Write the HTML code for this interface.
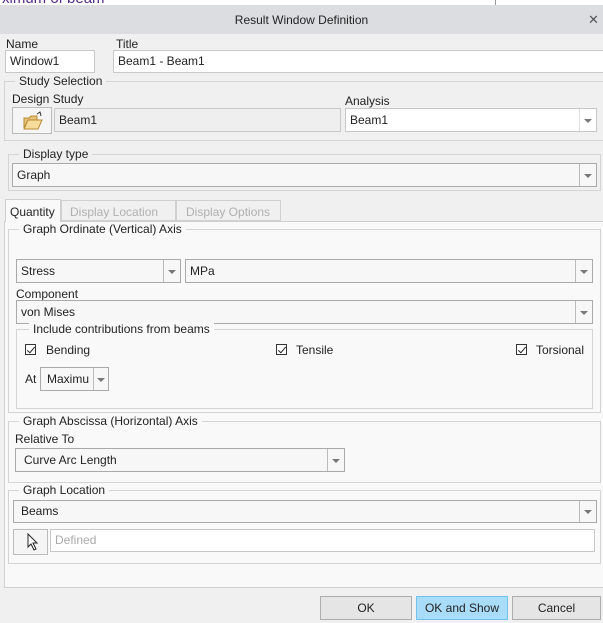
<!DOCTYPE html>
<html><head><meta charset="utf-8"><style>
*{box-sizing:border-box;margin:0;padding:0}
body{width:603px;height:623px;overflow:hidden;background:#f0f0f0;font-family:"Liberation Sans",sans-serif;font-size:12px;color:#222;position:relative}
.a{position:absolute}
.t{position:absolute;white-space:nowrap;font-size:12px}
.in{position:absolute;background:#fff;border:1px solid #c8c8c8;padding-left:4px;line-height:20px;white-space:nowrap}
.grp{position:absolute;border:1px solid #d4d4d4}
.lg{position:absolute;top:-8px;padding:0 4px;white-space:nowrap}
.cb{position:absolute;width:11px;height:11px;border:1px solid #333;background:#fff}
.cb::after{content:"";position:absolute;left:3px;top:0px;width:3px;height:7px;border:solid #222;border-width:0 1.5px 1.5px 0;transform:rotate(40deg)}
.btn{position:absolute;border:1px solid #adadad;background:#e5e5e5;text-align:center;line-height:22px}
</style></head><body>
<div class="a" style="left:0;top:0;width:603px;height:5px;background:#fff"></div>
<div class="t" style="left:2px;top:-10px;color:#5a2a8a;font-size:15px">ximum of beam</div>
<div class="a" style="left:495px;top:0;width:108px;height:5px;border-left:1px solid #999;background:#fff"></div>
<div class="a" style="left:0;top:5px;width:603px;height:29px;background:#dcdde0"></div>
<div class="t" style="left:0;width:603px;text-align:center;top:13px;font-size:12px">Result Window Definition</div>
<div class="t" style="left:588px;top:12px;font-size:13px;color:#555">✕</div>

<div class="t" style="left:6px;top:37px">Name</div>
<div class="t" style="left:116px;top:37px">Title</div>
<div class="in" style="left:5px;top:50px;width:90px;height:23px">Window1</div>
<div class="in" style="left:113px;top:50px;width:495px;height:23px">Beam1 - Beam1</div>

<div class="grp" style="left:4px;top:81px;width:605px;height:60px"><span class="lg" style="left:10px;background:#f0f0f0">Study Selection</span></div>
<div class="t" style="left:12px;top:92px">Design Study</div>
<div class="a" style="left:12px;top:107px;width:40px;height:27px;border:1px solid #bbb;background:#f5f5f5">
<svg width="22" height="20" style="position:absolute;left:9px;top:3px" viewBox="0 0 22 20"><path d="M2 7h5l2-2h6v4H6L2 17z" fill="#e6c27a" stroke="#b88a33"/><path d="M6 9h14l-4 9H2z" fill="#f6dc9a" stroke="#b88a33"/><path d="M15 3l3-2 1 4" fill="none" stroke="#333"/></svg></div>
<div class="in" style="left:54px;top:108px;width:287px;height:24px;background:#efefef;line-height:22px">Beam1</div>
<div class="t" style="left:345px;top:94px">Analysis</div>
<div class="in" style="left:345px;top:108px;width:252px;height:24px;line-height:22px">Beam1<b style="position:absolute;right:4px;top:10px;border-left:4px solid transparent;border-right:4px solid transparent;border-top:4px solid #777"></b><i style="position:absolute;right:16px;top:0;bottom:0;border-left:1px solid #ddd"></i></div>

<div class="grp" style="left:8px;top:154px;width:593px;height:37px"><span class="lg" style="left:10px;background:#f0f0f0">Display type</span></div>
<div class="in" style="left:12px;top:163px;width:585px;height:24px;line-height:22px;border-color:#aaa;background:#f7f7f7">Graph<b style="position:absolute;right:4px;top:10px;border-left:4px solid transparent;border-right:4px solid transparent;border-top:4px solid #777"></b><i style="position:absolute;right:16px;top:0;bottom:0;border-left:1px solid #bbb"></i></div>

<div class="a" style="left:4px;top:221px;width:600px;height:367px;border:1px solid #d0d0d0;background:#f9f9f9"></div>
<div class="a" style="left:5px;top:199px;width:56px;height:23px;border:1px solid #d0d0d0;border-bottom:none;background:#f9f9f9;padding:5px 0 0 4px;white-space:nowrap">Quantity</div>
<div class="a" style="left:61px;top:200px;width:115px;height:21px;border:1px solid #d0d0d0;background:#f0f0f0;color:#b0b0b0;padding:4px 0 0 8px;white-space:nowrap">Display Location</div>
<div class="a" style="left:176px;top:200px;width:105px;height:21px;border:1px solid #d0d0d0;background:#f0f0f0;color:#b0b0b0;padding:4px 0 0 9px;white-space:nowrap">Display Options</div>

<div class="grp" style="left:8px;top:229px;width:593px;height:184px"><span class="lg" style="left:10px;background:#f9f9f9">Graph Ordinate (Vertical) Axis</span></div>
<div class="in" style="left:16px;top:259px;width:165px;height:24px;line-height:22px;border-color:#aaa;background:#f7f7f7">Stress<b style="position:absolute;right:4px;top:10px;border-left:4px solid transparent;border-right:4px solid transparent;border-top:4px solid #777"></b><i style="position:absolute;right:16px;top:0;bottom:0;border-left:1px solid #bbb"></i></div>
<div class="in" style="left:185px;top:259px;width:408px;height:24px;line-height:22px;border-color:#aaa;background:#f7f7f7">MPa<b style="position:absolute;right:4px;top:10px;border-left:4px solid transparent;border-right:4px solid transparent;border-top:4px solid #777"></b><i style="position:absolute;right:16px;top:0;bottom:0;border-left:1px solid #bbb"></i></div>
<div class="t" style="left:16px;top:287px">Component</div>
<div class="in" style="left:16px;top:300px;width:577px;height:24px;line-height:22px;border-color:#aaa;background:#f7f7f7">von Mises<b style="position:absolute;right:4px;top:10px;border-left:4px solid transparent;border-right:4px solid transparent;border-top:4px solid #777"></b><i style="position:absolute;right:16px;top:0;bottom:0;border-left:1px solid #bbb"></i></div>
<div class="grp" style="left:16px;top:329px;width:577px;height:80px"><span class="lg" style="left:12px;background:#f9f9f9">Include contributions from beams</span></div>
<div class="cb" style="left:25px;top:344px"></div><div class="t" style="left:46px;top:343px">Bending</div>
<div class="cb" style="left:276px;top:344px"></div><div class="t" style="left:296px;top:343px">Tensile</div>
<div class="cb" style="left:516px;top:344px"></div><div class="t" style="left:536px;top:343px">Torsional</div>
<div class="t" style="left:25px;top:372px">At</div>
<div class="in" style="left:40px;top:367px;width:69px;height:24px;line-height:22px;border-color:#aaa;background:#f7f7f7;padding-left:6px">Maximu<b style="position:absolute;right:3px;top:10px;border-left:4px solid transparent;border-right:4px solid transparent;border-top:4px solid #777"></b><i style="position:absolute;right:14px;top:0;bottom:0;border-left:1px solid #bbb"></i></div>

<div class="grp" style="left:8px;top:421px;width:593px;height:62px"><span class="lg" style="left:10px;background:#f9f9f9">Graph Abscissa (Horizontal) Axis</span></div>
<div class="t" style="left:15px;top:432px">Relative To</div>
<div class="in" style="left:15px;top:448px;width:330px;height:24px;line-height:22px;border-color:#aaa;background:#f7f7f7;padding-left:8px">Curve Arc Length<b style="position:absolute;right:4px;top:10px;border-left:4px solid transparent;border-right:4px solid transparent;border-top:4px solid #777"></b><i style="position:absolute;right:16px;top:0;bottom:0;border-left:1px solid #bbb"></i></div>

<div class="grp" style="left:8px;top:490px;width:593px;height:74px"><span class="lg" style="left:10px;background:#f9f9f9">Graph Location</span></div>
<div class="in" style="left:13px;top:500px;width:584px;height:23px;line-height:21px;border-color:#aaa;background:#f7f7f7;padding-left:7px">Beams<b style="position:absolute;right:4px;top:9px;border-left:4px solid transparent;border-right:4px solid transparent;border-top:4px solid #777"></b><i style="position:absolute;right:16px;top:0;bottom:0;border-left:1px solid #bbb"></i></div>
<div class="a" style="left:13px;top:529px;width:35px;height:26px;border:1px solid #bbb;background:#f5f5f5">
<svg width="12" height="18" style="position:absolute;left:13px;top:3px" viewBox="0 0 12 18"><path d="M1 1v13l3-3 3 6 2-1-3-6h4z" fill="#fff" stroke="#222"/></svg></div>
<div class="in" style="left:50px;top:529px;width:545px;height:23px;color:#aaa;line-height:21px">Defined</div>

<div class="btn" style="left:320px;top:596px;width:92px;height:24px">OK</div>
<div class="btn" style="left:416px;top:596px;width:92px;height:24px;background:#a9dcf8;border-color:#72c1ee">OK and Show</div>
<div class="btn" style="left:512px;top:596px;width:89px;height:24px">Cancel</div>
</body></html>
